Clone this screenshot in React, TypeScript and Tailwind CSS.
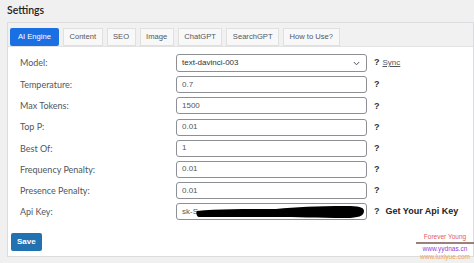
import React from 'react';

const tabs = ['AI Engine', 'Content', 'SEO', 'Image', 'ChatGPT', 'SearchGPT', 'How to Use?'];

const fields = [
  { label: 'Temperature:', value: '0.7' },
  { label: 'Max Tokens:', value: '1500' },
  { label: 'Top P:', value: '0.01' },
  { label: 'Best Of:', value: '1' },
  { label: 'Frequency Penalty:', value: '0.01' },
  { label: 'Presence Penalty:', value: '0.01' },
];

function Help() {
  return <span className="font-bold text-[#2c3338] text-[9px] font-['Liberation_Sans',sans-serif]">?</span>;
}

export default function App() {
  return (
    <div className="w-[474px] h-[263px] overflow-hidden bg-[#f0f0f1] relative font-['Liberation_Sans',Arial,sans-serif]">
      <h1 className="h-[22px] pl-[7px] pt-[3px] text-[10.5px] font-semibold text-[#1d2327] font-['Lato',sans-serif] leading-[14px]">
        Settings
      </h1>

      <div className="ml-[7px] border border-[#dcdcde] bg-white">
        {/* tab bar */}
        <div className="h-[24px] bg-[#f1f1f1] border-b border-[#e2e2e2] flex items-start gap-[4px] pl-[2px] pt-[5px]">
          {tabs.map((t, i) => (
            <div
              key={t}
              className={
                i === 0
                  ? 'h-[18px] px-[8px] flex items-center text-[7.6px] rounded-[2px] bg-[#1a6fe3] text-white'
                  : 'h-[18px] px-[5.5px] flex items-center text-[7.6px] border border-[#e0e0e0] bg-[#f8f8f8] text-[#50575e]'
              }
            >
              {t}
            </div>
          ))}
        </div>

        {/* form */}
        <div className="pl-[12px] pt-[7px] pb-[5px]">
          <div className="grid grid-cols-[156px_191px_auto] gap-y-[4.2px] items-center text-[9px] text-[#50575e] font-['Lato',sans-serif]">
            <div>Model:</div>
            <div className="h-[18px] border border-[#8c8f94] rounded-[3px] flex items-center justify-between pl-[5px] pr-[6px] text-[8px] text-[#2c3338] font-['Liberation_Sans',sans-serif]">
              <span>text-davinci-003</span>
              <svg width="7" height="5" viewBox="0 0 7 5" fill="none" stroke="#50575e" strokeWidth="1">
                <path d="M0.8 1 L3.5 3.8 L6.2 1" />
              </svg>
            </div>
            <div className="pl-[7px] flex items-center gap-[3px]">
              <Help />
              <span className="underline text-[8px] text-[#50575e] font-['Liberation_Sans',sans-serif]">Sync</span>
            </div>

            {fields.map((f) => (
              <React.Fragment key={f.label}>
                <div>{f.label}</div>
                <div className="h-[17px] border border-[#8c8f94] rounded-[3px] flex items-center pl-[5px] text-[8px] text-[#50575e] font-['Liberation_Sans',sans-serif]">
                  {f.value}
                </div>
                <div className="pl-[7px]">
                  <Help />
                </div>
              </React.Fragment>
            ))}

            <div>Api Key:</div>
            <div className="h-[17px] border border-[#8c8f94] rounded-[3px] flex items-center pl-[5px] text-[8px] text-[#50575e] font-['Liberation_Sans',sans-serif] relative">
              <span>sk-S</span>
              <svg className="absolute left-[19px] top-[1px]" width="169" height="14" viewBox="0 0 169 14">
                <path
                  d="M1 6 C20 4 50 4 80 4 C100 2 120 1 150 1 C162 1 168 2 168 6 C168 11 162 13 150 13 C120 13 100 12 80 12 C50 12 20 12 3 12 C0 12 0 6 1 6 Z"
                  fill="#000"
                />
              </svg>
            </div>
            <div className="pl-[7px] flex items-center gap-[6px]">
              <Help />
              <span className="font-bold text-[9px] text-[#1d2327] font-['Liberation_Sans',sans-serif]">Get Your Api Key</span>
            </div>
          </div>

          <button className="mt-[13px] -ml-[9px] h-[18px] px-[6px] rounded-[2px] bg-[#2271b1] text-white text-[8px] font-semibold">
            Save
          </button>
        </div>
      </div>

      {/* watermark */}
      <div className="absolute left-[416px] top-[233px] w-[58px] flex flex-col items-center text-[6.5px] leading-[8px] font-['Liberation_Sans',sans-serif]">
        <span className="text-[#e0605a]">Forever Young</span>
        <span className="w-full h-[1.5px] bg-[#9a8078] my-[1px]"></span>
        <span className="text-[#8a3fd9]">www.yydnas.cn</span>
        <span className="text-[#f0a050]">www.luxiyue.com</span>
      </div>
    </div>
  );
}
